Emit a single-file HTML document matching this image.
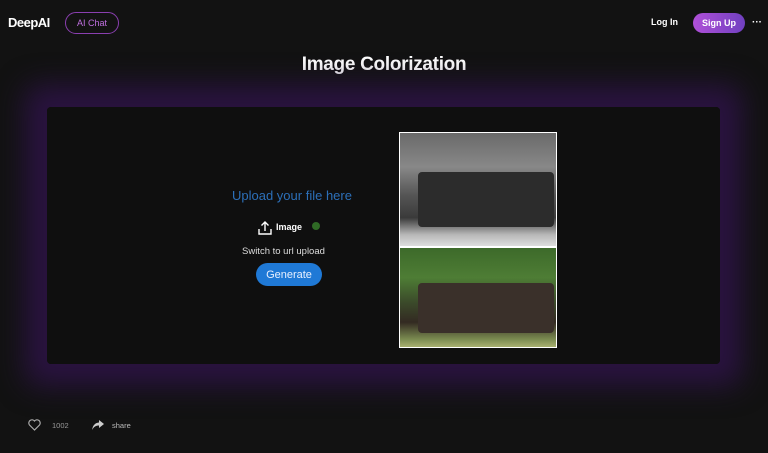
<!DOCTYPE html>
<html><head><style>
body{margin:0;width:768px;height:453px;background:#121212;font-family:"Liberation Sans",sans-serif;position:relative;overflow:hidden;color:#fff}
.a{position:absolute}
</style></head><body>
<div class="a" style="left:8px;top:15px;font-size:13px;font-weight:bold;letter-spacing:-0.5px">DeepAI</div>
<div class="a" style="left:65px;top:12px;width:52px;height:20px;border:1.5px solid #8a3fb0;border-radius:11px;color:#c070e0;font-size:9px;text-align:center;line-height:20px">AI Chat</div>
<div class="a" style="left:651px;top:17px;font-size:9px;font-weight:bold">Log In</div>
<div class="a" style="left:693px;top:13px;width:52px;height:20px;border-radius:10px;background:linear-gradient(90deg,#b050d8,#7040c0);font-size:9px;font-weight:bold;text-align:center;line-height:20px">Sign Up</div>
<div class="a" style="left:752px;top:17px;font-size:10px;font-weight:bold">···</div>
<div class="a" style="left:0;width:768px;top:54px;text-align:center;font-size:19px;font-weight:bold;letter-spacing:-0.3px">Image Colorization</div>
<div class="a" style="left:47px;top:107px;width:673px;height:257px;background:#0f0f0f;border-radius:4px;box-shadow:0 0 28px 22px #2a1340"></div>
<div class="a" style="left:47px;top:107px;width:673px;height:257px;background:#0f0f0f;border-radius:4px"></div>
<div class="a" style="left:232px;top:188px;font-size:13px;color:#2c6fb8">Upload your file here</div>
<svg class="a" style="left:257px;top:220px" width="16" height="16" viewBox="0 0 16 16" fill="none" stroke="#fff" stroke-width="1.4"><path d="M8 11V2M4.5 5.5 8 2l3.5 3.5M2 9v5h12V9"/></svg>
<div class="a" style="left:276px;top:222px;font-size:9px;font-weight:bold">Image</div>
<div class="a" style="left:312px;top:222px;width:8px;height:8px;border-radius:50%;background:#2f6a25"></div>
<div class="a" style="left:242px;top:246px;font-size:9.5px;color:#ddd">Switch to url upload</div>
<div class="a" style="left:256px;top:263px;width:66px;height:23px;border-radius:12px;background:#1f79d6;font-size:11px;text-align:center;line-height:24px;color:#e8f0ff">Generate</div>
<div class="a" style="left:399px;top:132px;width:158px;height:216px;background:#fff"></div>
<div class="a" style="left:400px;top:133px;width:156px;height:113px;background:linear-gradient(180deg,#6a6a6a 0%,#888 30%,#555 55%,#3a3a3a 75%,#b8b8b8 90%,#ddd 100%)"></div>
<div class="a" style="left:418px;top:172px;width:136px;height:55px;background:#2c2c2c;border-radius:4px"></div>
<div class="a" style="left:400px;top:248px;width:156px;height:99px;background:linear-gradient(180deg,#3d6a2a 0%,#4e7d35 30%,#3b4a2a 55%,#332a22 75%,#7a8a50 92%,#a8b070 100%)"></div>
<div class="a" style="left:418px;top:283px;width:136px;height:50px;background:#3a302a;border-radius:4px"></div>
<svg class="a" style="left:28px;top:419px" width="13" height="12" viewBox="0 0 13 12" fill="none" stroke="#aaa" stroke-width="1.2"><path d="M6.5 11 1.5 6A2.8 2.8 0 0 1 6.5 2a2.8 2.8 0 0 1 5 4z"/></svg>
<div class="a" style="left:52px;top:421px;font-size:7.5px;color:#999">1002</div>
<svg class="a" style="left:92px;top:420px" width="12" height="10" viewBox="0 0 12 10"><path d="M7 0l5 4-5 4V5.5C4 5.5 2 6.5 0 10 1 5 3 3 7 2.5z" fill="#ccc"/></svg>
<div class="a" style="left:112px;top:421px;font-size:7.5px;color:#bbb">share</div>
</body></html>
